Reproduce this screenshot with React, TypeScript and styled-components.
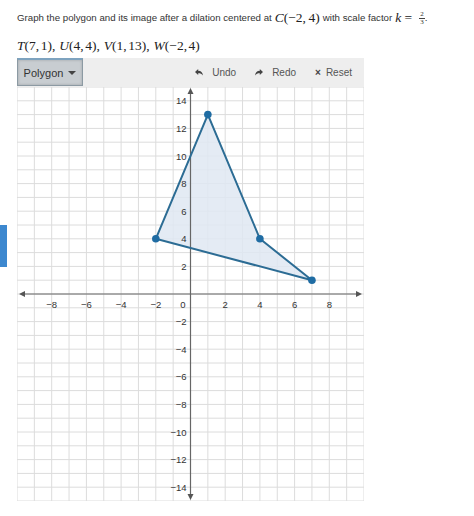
import React from "react";
import styled, { createGlobalStyle } from "styled-components";

const GlobalStyle = createGlobalStyle`
  body {
    margin: 0;
    background: #fff;
    font-family: "Liberation Sans", Arial, sans-serif;
    color: #333;
  }
`;

const Page = styled.div`
  padding: 10px 0 0 17px;
  width: 474px;
  height: 516px;
  box-sizing: border-box;
  position: relative;
`;

const Prompt = styled.p`
  margin: 0;
  font-size: 9.7px;
  line-height: 16px;
  color: #333;
  display: flex;
  align-items: center;
  white-space: nowrap;
`;

const Math = styled.span<{ $size?: number }>`
  font-family: "Liberation Serif", "Times New Roman", serif;
  font-size: ${(p) => p.$size ?? 13.5}px;
  color: #222;
  margin: 0 3px;
`;

const Var = styled.i`
  font-style: italic;
`;

// comma inside math mode carries a thin space after it
const Comma = styled.span<{ $space?: number }>`
  margin-right: ${(p) => p.$space ?? 2.5}px;
`;

const Frac = styled.span`
  display: inline-flex;
  flex-direction: column;
  align-items: center;
  font-family: "Liberation Serif", serif;
  font-size: 7px;
  line-height: 7px;
  margin-left: 4px;
  & > span:first-child {
    border-bottom: 0.5px solid #444;
    padding: 0 1px;
  }
`;

const Points = styled.div`
  margin-top: 11px;
  font-family: "Liberation Serif", "Times New Roman", serif;
  font-size: 13.5px;
  line-height: 18px;
  color: #222;
`;

const Widget = styled.div`
  margin-top: 3px;
  width: 347px;
`;

const Toolbar = styled.div`
  height: 29px;
  background: #eeeeee;
  display: flex;
  align-items: center;
`;

const ToolSelect = styled.button`
  height: 28px;
  width: 66px;
  margin: 0;
  align-self: flex-start;
  background: #c8cdd1;
  border: 1px solid #8c9aa3;
  border-top: 2px solid #7ea3bf;
  box-shadow: inset 0 0 3px rgba(0, 0, 0, 0.2);
  font-family: "Liberation Sans", Arial, sans-serif;
  font-size: 11px;
  color: #333;
  display: flex;
  align-items: center;
  justify-content: center;
  gap: 5px;
  padding: 0;
`;

const Caret = styled.span`
  width: 0;
  height: 0;
  border-left: 4px solid transparent;
  border-right: 4px solid transparent;
  border-top: 4px solid #444;
`;

const Actions = styled.div`
  margin-left: auto;
  display: flex;
  align-items: center;
  gap: 19px;
  padding-right: 12px;
`;

const Action = styled.span<{ $gap?: number }>`
  display: flex;
  align-items: center;
  gap: ${(p) => p.$gap ?? 9}px;
  font-size: 10px;
  color: #555;
`;

const ResetMark = styled.span`
  font-weight: 700;
  font-size: 10px;
  color: #444;
`;

const SideTab = styled.div`
  position: fixed;
  left: 0;
  top: 225px;
  width: 7px;
  height: 42px;
  background: #3d88cf;
`;

const X_MIN = -10;
const X_MAX = 10;
const Y_MIN = -15;
const Y_MAX = 15;
const W = 347;
const H = 414;
const ux = W / (X_MAX - X_MIN);
const uy = H / (Y_MAX - Y_MIN);
const px = (x: number) => (x - X_MIN) * ux;
const py = (y: number) => (Y_MAX - y) * uy;

const polygon: [number, number][] = [
  [7, 1],
  [4, 4],
  [1, 13],
  [-2, 4],
];

const range = (a: number, b: number) =>
  Array.from({ length: b - a + 1 }, (_, i) => a + i);

const minus = (n: number) => (n < 0 ? `\u2212${-n}` : `${n}`);

const Plot: React.FC = () => {
  const ox = px(0);
  const oy = py(0);
  const pts = polygon.map(([x, y]) => `${px(x)},${py(y)}`).join(" ");
  return (
    <svg width={W} height={H} style={{ display: "block" }}>
      {range(X_MIN, X_MAX).map((x) => (
        <line
          key={`v${x}`}
          x1={px(x)}
          x2={px(x)}
          y1={0}
          y2={H}
          stroke="#dcdcdc"
          strokeWidth={1}
        />
      ))}
      {range(Y_MIN, Y_MAX).map((y) => (
        <line
          key={`h${y}`}
          x1={0}
          x2={W}
          y1={py(y)}
          y2={py(y)}
          stroke="#dcdcdc"
          strokeWidth={1}
        />
      ))}
      <polygon points={pts} fill="#dfe8f2" fillOpacity={0.85} />
      {/* axes */}
      <line x1={6} x2={W - 6} y1={oy} y2={oy} stroke="#666" strokeWidth={1.2} />
      <line x1={ox} x2={ox} y1={5} y2={H - 5} stroke="#666" strokeWidth={1.2} />
      <path d={`M2 ${oy} L8 ${oy - 3} L8 ${oy + 3} Z`} fill="#555" />
      <path d={`M${W - 2} ${oy} L${W - 8} ${oy - 3} L${W - 8} ${oy + 3} Z`} fill="#555" />
      <path d={`M${ox} 1 L${ox - 3} 7 L${ox + 3} 7 Z`} fill="#555" />
      <path d={`M${ox} ${H - 1} L${ox - 3} ${H - 7} L${ox + 3} ${H - 7} Z`} fill="#555" />
      <g fontFamily="Liberation Sans, Arial, sans-serif" fontSize={9.5} fill="#333">
        {[-8, -6, -4, -2, 2, 4, 6, 8].map((x) => (
          <text key={`lx${x}`} x={px(x)} y={oy + 14} textAnchor="middle">
            {minus(x)}
          </text>
        ))}
        <text x={ox - 5} y={oy + 14} textAnchor="end">
          0
        </text>
        {[-14, -12, -10, -8, -6, -4, -2, 2, 4, 6, 8, 10, 12, 14].map((y) => (
          <text key={`ly${y}`} x={ox - 4} y={py(y) + 3.5} textAnchor="end">
            {minus(y)}
          </text>
        ))}
      </g>
      <polygon
        points={pts}
        fill="none"
        stroke="#2c6c94"
        strokeWidth={2}
        strokeLinejoin="round"
      />
      {polygon.map(([x, y]) => (
        <circle key={`${x},${y}`} cx={px(x)} cy={py(y)} r={3.8} fill="#1f6ca3" />
      ))}
    </svg>
  );
};

const UndoIcon = () => (
  <svg width="8" height="7" viewBox="0 0 8 7">
    <path d="M0 3 L3.2 0 L3.2 1.8 C6 1.8 7.6 3.4 8 6.6 C6.8 4.8 5.4 4.2 3.2 4.2 L3.2 6 Z" fill="#444" />
  </svg>
);

const RedoIcon = () => (
  <svg width="8" height="7" viewBox="0 0 8 7">
    <path d="M8 3 L4.8 0 L4.8 1.8 C2 1.8 0.4 3.4 0 6.6 C1.2 4.8 2.6 4.2 4.8 4.2 L4.8 6 Z" fill="#444" />
  </svg>
);

const Point: React.FC<{ name: string; x: number; y: number; last?: boolean }> = ({
  name,
  x,
  y,
  last,
}) => (
  <>
    <Var>{name}</Var>({minus(x)}
    <Comma $space={1.5}>,</Comma>
    {minus(y)})
    {!last && <Comma $space={4}>,</Comma>}
  </>
);

const App: React.FC = () => (
  <>
    <GlobalStyle />
    <Page>
      <Prompt>
        Graph the polygon and its image after a dilation centered at
        <Math>
          <Var>C</Var>(−2<Comma>,</Comma>4)
        </Math>
        with scale factor
        <Math>
          <Var>k</Var> =
        </Math>
        <Frac>
          <span>2</span>
          <span>3</span>
        </Frac>
        .
      </Prompt>
      <Points>
        <Point name="T" x={7} y={1} />
        <Point name="U" x={4} y={4} />
        <Point name="V" x={1} y={13} />
        <Point name="W" x={-2} y={4} last />
      </Points>
      <Widget>
        <Toolbar>
          <ToolSelect>
            Polygon <Caret />
          </ToolSelect>
          <Actions>
            <Action>
              <UndoIcon /> Undo
            </Action>
            <Action>
              <RedoIcon /> Redo
            </Action>
            <Action $gap={5}>
              <ResetMark>×</ResetMark> Reset
            </Action>
          </Actions>
        </Toolbar>
        <Plot />
      </Widget>
      <SideTab />
    </Page>
  </>
);

export default App;
